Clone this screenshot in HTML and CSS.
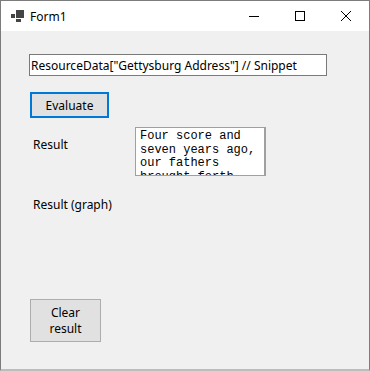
FILE: index.html
```html
<!DOCTYPE html>
<html lang="en">
<head>
    <meta charset="UTF-8">
    <title>Form1</title>
    <link rel="stylesheet" href="styles.css">
</head>
<body>
    <div class="window">
        <div class="title-bar">
            <svg class="app-icon" width="14" height="12" viewBox="0 0 14 12">
                <rect x="0" y="4" width="4" height="4" fill="#444"/>
                <rect x="5" y="0" width="8" height="8" fill="#444"/>
                <rect x="5" y="9" width="5" height="3" fill="#444"/>
            </svg>
            <span class="title">Form1</span>
            <div class="caption-buttons">
                <div class="caption-btn">
                    <svg width="10" height="10" viewBox="0 0 10 10"><line x1="0" y1="5.5" x2="10" y2="5.5" stroke="#000" stroke-width="1"/></svg>
                </div>
                <div class="caption-btn">
                    <svg width="10" height="10" viewBox="0 0 10 10"><rect x="0.5" y="0.5" width="9" height="9" fill="none" stroke="#000" stroke-width="1"/></svg>
                </div>
                <div class="caption-btn">
                    <svg width="10" height="10" viewBox="0 0 10 10"><path d="M0 0 L10 10 M10 0 L0 10" stroke="#000" stroke-width="1"/></svg>
                </div>
            </div>
        </div>

        <div class="client">
            <input class="expr-input" type="text" value='ResourceData["Gettysburg Address"] // Snippet'>
            <button class="btn btn-evaluate">Evaluate</button>

            <div class="result-row">
                <span class="label">Result</span>
                <div class="result-box">Four score and
seven years ago,
our fathers
brought forth</div>
            </div>

            <span class="label label-graph">Result (graph)</span>

            <button class="btn btn-clear">Clear<br>result</button>
        </div>
    </div>
</body>
</html>
```

FILE: styles.css
```css
:root {
    --form-bg: #f0f0f0;
    --btn-bg: #e1e1e1;
    --btn-border: #adadad;
    --focus-blue: #0078d7;
    --input-border: #7a7a7a;
    --frame: #7c7c7c;
}

body {
    margin: 0;
    font-family: 'Noto Sans', 'Open Sans', sans-serif;
    font-size: 12px;
    background-color: var(--form-bg);
}

.window {
    width: 368px;
    height: 368px;
    border: 1px solid var(--frame);
    border-bottom: 2px solid #bdbdbd;
    background-color: var(--form-bg);
    overflow: hidden;
}

.title-bar {
    height: 30px;
    background-color: #fff;
    display: flex;
    align-items: center;
}

.app-icon {
    margin-left: 10px;
    margin-top: -1px;
}

.title {
    margin-left: 5px;
    font-size: 12px;
    color: #000;
}

.caption-buttons {
    margin-left: auto;
    display: flex;
    height: 100%;
}

.caption-btn {
    width: 46px;
    height: 100%;
    display: flex;
    align-items: center;
    justify-content: center;
}

.client {
    display: flex;
    flex-direction: column;
    align-items: flex-start;
    padding-left: 28px;
}

.expr-input {
    margin-top: 23px;
    width: 298px;
    height: 22px;
    box-sizing: border-box;
    border: 1px solid var(--input-border);
    padding: 0 1px;
    font-family: inherit;
    font-size: 12px;
    color: #000;
    background: #fff;
    outline: none;
}

.btn {
    font-family: inherit;
    font-size: 12px;
    color: #000;
    background-color: var(--btn-bg);
    border: 1px solid var(--btn-border);
    padding: 0;
    box-sizing: border-box;
}

.btn-evaluate {
    margin-top: 16px;
    margin-left: 1px;
    width: 79px;
    height: 26px;
    border: 2px solid var(--focus-blue);
}

.result-row {
    margin-top: 9px;
    display: flex;
    align-items: flex-start;
}

.label {
    color: #000;
    font-size: 12px;
    margin-left: 4px;
}

.result-row .label {
    width: 102px;
    margin-top: 9px;
}

.result-box {
    width: 131px;
    height: 49px;
    box-sizing: border-box;
    border: 1px solid #a0a0a0;
    border-right-width: 2px;
    background: #fff;
    padding: 2px 4px;
    font-family: 'Liberation Mono', monospace;
    font-size: 12px;
    line-height: 13.5px;
    white-space: pre;
    overflow: hidden;
    color: #000;
}

.label-graph {
    margin-top: 20px;
}

.btn-clear {
    margin-top: 86px;
    margin-left: 1px;
    width: 71px;
    height: 43px;
    line-height: 16px;
}
```
